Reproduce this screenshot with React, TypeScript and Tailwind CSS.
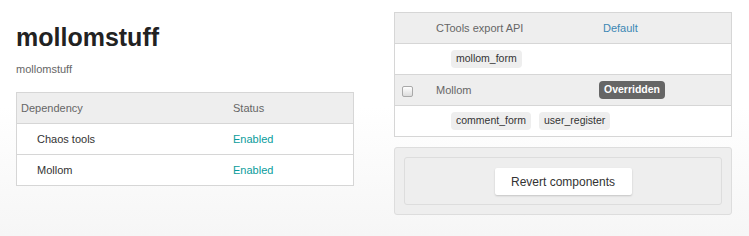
const deps = [
  { name: 'Chaos tools', status: 'Enabled' },
  { name: 'Mollom', status: 'Enabled' },
]

function Pill({ children }: { children: React.ReactNode }) {
  return (
    <span className="inline-flex h-[18px] items-center rounded-[4px] bg-[#eeeeee] px-[5px] text-[10.5px] text-[#333]">
      {children}
    </span>
  )
}

function Checkbox() {
  return (
    <span className="mt-[3px] block h-[11px] w-[11px] rounded-[2px] border border-[#a9a9a9] bg-gradient-to-b from-white to-[#dcdcdc]" />
  )
}

export default function App() {
  return (
    <div
      className="min-h-[236px] w-full bg-gradient-to-b from-white from-45% to-[#f6f6f6] px-4 text-[11px] text-[#333]"
      style={{ fontFamily: '"Liberation Sans", Arial, sans-serif' }}
    >
      <div className="flex gap-[40px]">
        {/* left column */}
        <div className="w-[338px] shrink-0 pt-[22px]">
          <h1 className="text-[25px] font-bold leading-[30px] text-[#222]">mollomstuff</h1>
          <p className="mt-[9px] leading-[16px] text-[#666]">mollomstuff</p>
          <div className="mt-[15px] border border-b-0 border-[#d6d6d6]">
            <div className="flex h-[31px] items-center border-b border-[#d6d6d6] bg-[#eeeeee] text-[#666]">
              <div className="w-[212px] pl-[4px]">Dependency</div>
              <div className="pl-[4px]">Status</div>
            </div>
            {deps.map((d) => (
              <div key={d.name} className="flex h-[31px] items-center border-b border-[#d6d6d6] bg-white">
                <div className="w-[212px] pl-[20px]">{d.name}</div>
                <div className="pl-[4px] text-[#0a9c9c]">{d.status}</div>
              </div>
            ))}
          </div>
        </div>

        {/* right column */}
        <div className="w-[338px] shrink-0 pt-[12px]">
          <div className="border border-b-0 border-[#d6d6d6]">
            <div className="flex h-[31px] items-center border-b border-[#d6d6d6] bg-[#eeeeee] text-[#666]">
              <div className="w-[41px]" />
              <div className="w-[167px]">CTools export API</div>
              <div className="text-[#3b87b4]">Default</div>
            </div>
            <div className="flex h-[31px] items-center gap-2 border-b border-[#d6d6d6] bg-white pl-[56px]">
              <Pill>mollom_form</Pill>
            </div>
            <div className="flex h-[31px] items-center border-b border-[#d6d6d6] bg-[#eeeeee] text-[#666]">
              <div className="w-[41px] pl-[7px]">
                <Checkbox />
              </div>
              <div className="w-[163px]">Mollom</div>
              <span className="inline-flex h-[18px] items-center rounded-[4px] bg-[#666666] px-[5px] text-[10.5px] font-bold text-white">
                Overridden
              </span>
            </div>
            <div className="flex h-[31px] items-center gap-[8px] border-b border-[#d6d6d6] bg-white pl-[56px]">
              <Pill>comment_form</Pill>
              <Pill>user_register</Pill>
            </div>
          </div>

          <div className="mt-[10px] rounded-[3px] border border-[#dddddd] bg-[#eeeeee] p-[9px]">
            <div className="flex justify-center rounded-[3px] border border-[#dddddd] pb-[9px] pt-[10px]">
              <button className="h-[27px] w-[137px] rounded-[2px] bg-white text-[12px] text-[#333] shadow-[0_1px_2px_rgba(0,0,0,0.18)]">
                Revert components
              </button>
            </div>
          </div>
        </div>
      </div>
    </div>
  )
}
